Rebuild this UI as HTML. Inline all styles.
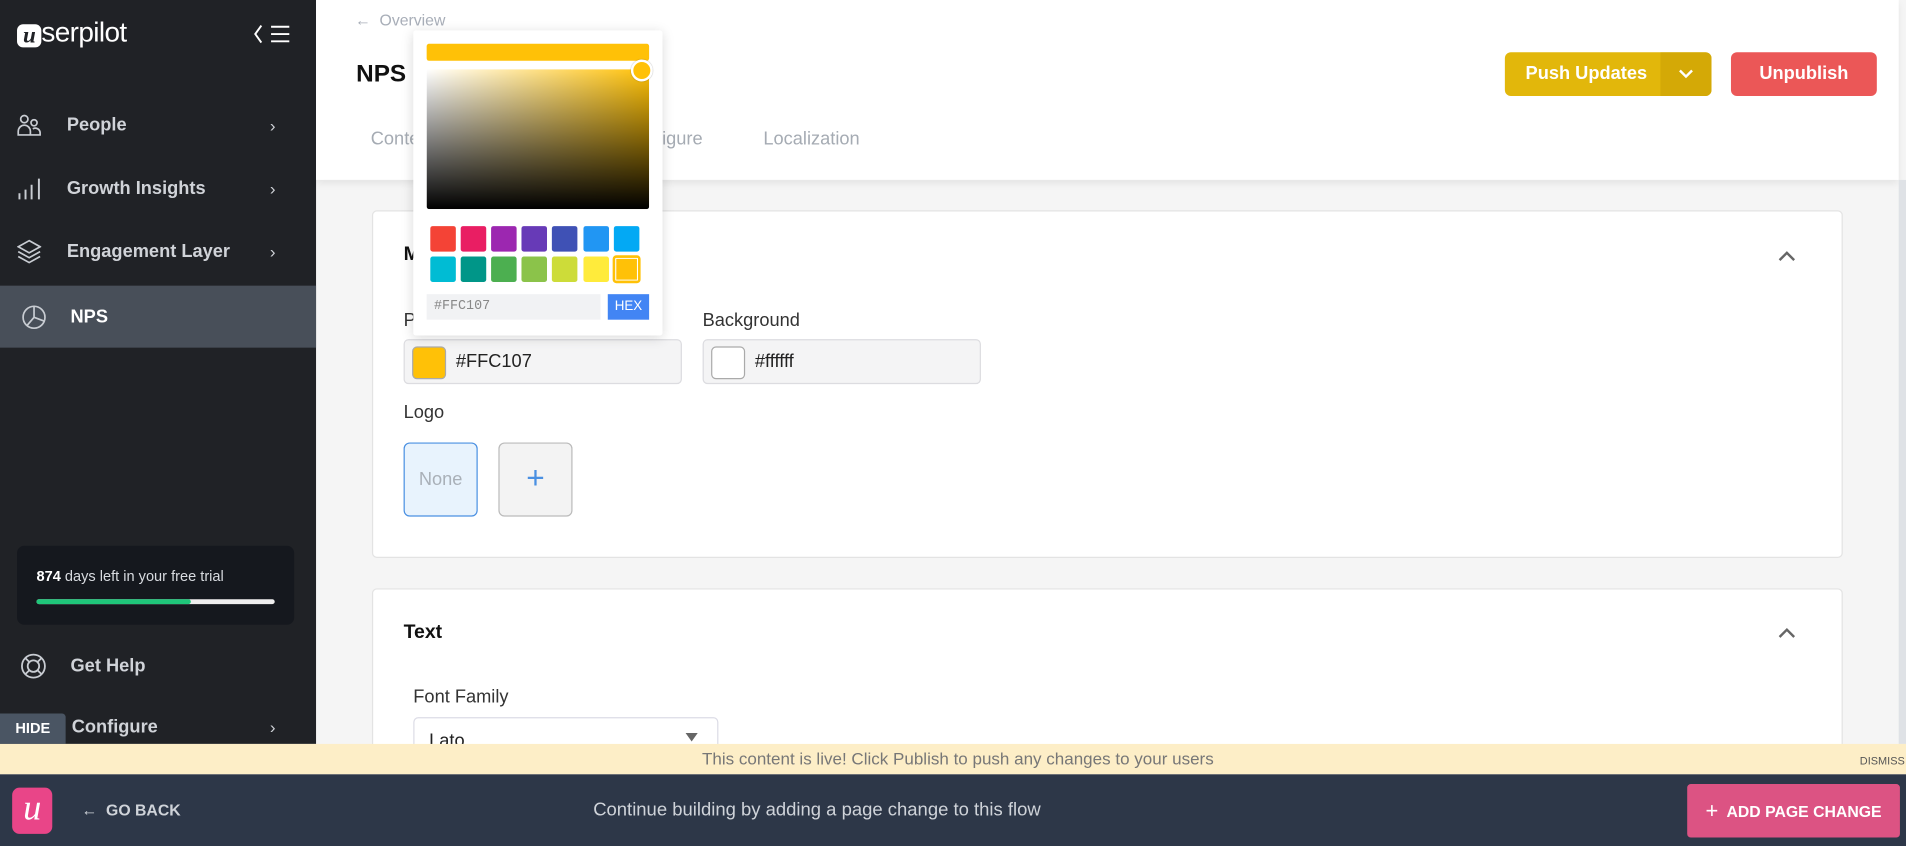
<!DOCTYPE html>
<html><head><meta charset="utf-8"><style>
*{box-sizing:border-box;margin:0;padding:0}
html,body{width:1906px;height:846px;overflow:hidden;background:#f5f5f5;font-family:"Liberation Sans",sans-serif}
#w{position:absolute;left:0;top:0;width:1568px;height:696px;transform:scale(1.21556);transform-origin:0 0;background:#f5f5f5}
.a{position:absolute}
.sb{left:0;top:0;width:260px;height:612px;background:#202226}
.nav{left:0;width:260px;height:52px;color:#d0d3d8;font-size:15px;font-weight:bold}
.nav span{position:absolute;left:55px;top:50%;transform:translateY(-50%)}
.nav .ch{left:222px;font-weight:normal;font-size:14px}
.nav svg{position:absolute;left:14px;top:50%;transform:translateY(-50%)}
.sw{width:21px;height:21px;border-radius:2px;position:absolute}
.inp{height:37px;width:229px;background:#f4f4f5;border:1px solid #dcdce0;border-radius:4px}
.lbl{font-size:15px;color:#333}
</style></head><body><div id="w">
<!-- sidebar -->
<div class="a sb">
 <div class="a" style="left:14px;top:13px;color:#fff;font-size:23px;letter-spacing:-0.5px"><span style="display:inline-block;background:#fff;color:#202226;border-radius:5px;font-family:'Liberation Serif',serif;font-style:italic;font-weight:bold;width:20px;height:19px;line-height:19px;text-align:center;font-size:19px;vertical-align:-1px">u</span>serpilot</div>
 <svg class="a" style="left:208px;top:19px" width="32" height="18" viewBox="0 0 32 18" fill="none" stroke="#fff" stroke-width="1.6"><path d="M7 2 L2 9 L7 16"/><path d="M15 3H30M15 9H30M15 15H30"/></svg>
 <div class="a nav" style="top:77px"><svg width="20" height="18" viewBox="0 0 20 18" fill="none" stroke="#c8ccd2" stroke-width="1.4"><circle cx="6" cy="4" r="3"/><circle cx="14" cy="7" r="2.5"/><path d="M1 17v-3a5 5 0 0 1 10 0v3zM11 17h8v-2a4 4 0 0 0-6-3"/></svg><span>People</span><span class="ch">›</span></div>
 <div class="a nav" style="top:129px"><svg width="20" height="20" viewBox="0 0 20 20" stroke="#c8ccd2" stroke-width="1.6"><path d="M2 19v-5M7 19v-8M12 19v-12M18 19v-17"/></svg><span>Growth Insights</span><span class="ch">›</span></div>
 <div class="a nav" style="top:181px"><svg width="20" height="20" viewBox="0 0 20 20" fill="none" stroke="#c8ccd2" stroke-width="1.4"><path d="M10 1L19 6L10 11L1 6Z"/><path d="M1 10L10 15L19 10M1 14L10 19L19 14"/></svg><span>Engagement Layer</span><span class="ch">›</span></div>
 <div class="a nav" style="top:235px;height:51px;background:#484f59;color:#fff"><svg style="left:18px" width="20" height="20" viewBox="0 0 20 20" fill="none" stroke="#c8ccd2" stroke-width="1.4"><circle cx="10" cy="10" r="9"/><path d="M10 1v9l8 3M10 10l-6 7"/></svg><span style="left:58px">NPS</span></div>
 <div class="a" style="left:14px;top:449px;width:228px;height:65px;background:#15181e;border-radius:6px">
  <div class="a" style="left:16px;top:18px;font-size:12px;color:#d8dbe0"><b style="color:#fff">874</b> days left in your free trial</div>
  <div class="a" style="left:16px;top:44px;width:196px;height:4px;background:#eee;border-radius:2px"><div style="width:127px;height:4px;background:#1fc67a;border-radius:2px"></div></div>
 </div>
 <div class="a nav" style="top:522px"><svg style="left:17px" width="21" height="21" viewBox="0 0 20 20" fill="none" stroke="#c8ccd2" stroke-width="1.4"><circle cx="10" cy="10" r="9"/><circle cx="10" cy="10" r="4.5"/><path d="M4 4l3 3M16 4l-3 3M4 16l3-3M16 16l-3-3"/></svg><span style="left:58px">Get Help</span></div>
 <div class="a nav" style="top:572px"><span style="left:59px">Configure</span><span class="ch">›</span></div>
 <div class="a" style="left:0;top:587px;width:54px;height:25px;background:#4a5563;color:#fff;font-weight:bold;font-size:12px;line-height:25px;text-align:center;border-radius:0 3px 0 0">HIDE</div>
</div>
<!-- header -->
<div class="a" style="left:260px;top:0;width:1302px;height:148px;background:#fff;box-shadow:0 3px 6px rgba(0,0,0,.07)"></div>
<div class="a" style="left:1562px;top:148px;width:6px;height:464px;background:#dfe2e6"></div>
<div class="a" style="left:292px;top:9px;font-size:13px;color:#a8aeb8">←&nbsp;&nbsp;Overview</div>
<div class="a" style="left:293px;top:50px;font-size:20px;font-weight:bold;color:#111">NPS</div>
<div class="a" style="left:305px;top:106px;font-size:15px;color:#a5abb3">Content</div>
<div class="a" style="left:513px;top:106px;font-size:15px;color:#a5abb3">Configure</div>
<div class="a" style="left:628px;top:106px;font-size:15px;color:#a5abb3">Localization</div>
<div class="a" style="left:1238px;top:43px;width:170px;height:36px;background:#e2b70b;border-radius:5px;overflow:hidden"><div class="a" style="left:17px;top:9px;color:#fff;font-weight:bold;font-size:15px">Push Updates</div><div class="a" style="left:128px;top:0;width:42px;height:36px;background:#d4a906"><svg class="a" style="left:14px;top:13px" width="14" height="10" viewBox="0 0 14 10" fill="none" stroke="#fff" stroke-width="2"><path d="M2 2l5 5 5-5"/></svg></div></div>
<div class="a" style="left:1424px;top:43px;width:120px;height:36px;background:#eb5757;border-radius:5px;color:#fff;font-weight:bold;font-size:15px;text-align:center;line-height:36px">Unpublish</div>
<!-- card1 -->
<div class="a" style="left:306px;top:173px;width:1210px;height:286px;background:#fff;border:1px solid #e3e3e3;border-radius:4px"></div>
<div class="a" style="left:332px;top:201px;font-size:16px;font-weight:bold;color:#111">Main</div>
<svg class="a" style="left:1463px;top:206px" width="14" height="9" viewBox="0 0 14 9" fill="none" stroke="#666" stroke-width="2"><path d="M1 8l6-6 6 6"/></svg>
<div class="a lbl" style="left:332px;top:255px">Primary</div>
<div class="a lbl" style="left:578px;top:255px">Background</div>
<div class="a inp" style="left:332px;top:279px"><div class="a" style="left:6px;top:5px;width:28px;height:27px;background:#ffc107;border:1px solid #aaa;border-radius:4px"></div><div class="a" style="left:42px;top:9px;font-size:15px;color:#222">#FFC107</div></div>
<div class="a inp" style="left:578px;top:279px"><div class="a" style="left:6px;top:5px;width:28px;height:27px;background:#fff;border:1px solid #aaa;border-radius:4px"></div><div class="a" style="left:42px;top:9px;font-size:15px;color:#222">#ffffff</div></div>
<div class="a lbl" style="left:332px;top:331px">Logo</div>
<div class="a" style="left:332px;top:364px;width:61px;height:61px;background:#e8f3fd;border:1px solid #4a90e2;border-radius:5px;color:#a9b0b8;font-size:15px;text-align:center;line-height:59px">None</div>
<div class="a" style="left:410px;top:364px;width:61px;height:61px;background:#f3f3f3;border:1px solid #bbb;border-radius:5px;color:#4a90e2;font-size:26px;text-align:center;line-height:57px">+</div>
<!-- card2 -->
<div class="a" style="left:306px;top:484px;width:1210px;height:140px;background:#fff;border:1px solid #e3e3e3;border-radius:4px"></div>
<div class="a" style="left:332px;top:512px;font-size:16px;font-weight:bold;color:#111">Text</div>
<svg class="a" style="left:1463px;top:516px" width="14" height="9" viewBox="0 0 14 9" fill="none" stroke="#666" stroke-width="2"><path d="M1 8l6-6 6 6"/></svg>
<div class="a lbl" style="left:340px;top:565px">Font Family</div>
<div class="a" style="left:340px;top:590px;width:251px;height:30px;border:1px solid #dcdce6;border-radius:4px;background:#fff"><div class="a" style="left:12px;top:10px;font-size:15px;color:#222">Lato</div><div class="a" style="left:223px;top:12px;width:0;height:0;border-left:5px solid transparent;border-right:5px solid transparent;border-top:7px solid #666"></div></div>
<!-- banner -->
<div class="a" style="left:0;top:612px;width:1568px;height:25px;background:#fdeec7"></div>
<div class="a" style="left:0;top:616px;width:1576px;text-align:center;font-size:14px;color:#777">This content is live! Click Publish to push any changes to your users</div>
<div class="a" style="left:1530px;top:621px;font-size:9px;color:#555">DISMISS</div>
<!-- bottom -->
<div class="a" style="left:0;top:637px;width:1568px;height:59px;background:#2d3748"></div>
<div class="a" style="left:10px;top:648px;width:33px;height:38px;background:#e94588;border-radius:6px;color:#fff;font-family:'Liberation Serif',serif;font-style:italic;font-size:30px;text-align:center;line-height:34px">u</div>
<div class="a" style="left:67px;top:659px;font-size:13px;color:#cfd3d9;font-weight:bold">←&nbsp; GO BACK</div>
<div class="a" style="left:488px;top:658px;font-size:15.2px;color:#cfd3d9">Continue building by adding a page change to this flow</div>
<div class="a" style="left:1388px;top:645px;width:175px;height:44px;background:#dc5383;border-radius:3px;color:#fff;font-weight:bold;font-size:13px;line-height:44px;text-align:center"><span style="font-weight:normal;font-size:18px;vertical-align:-1px">+</span>&nbsp; ADD PAGE CHANGE</div>
<!-- picker -->
<div class="a" style="left:340px;top:25px;width:205px;height:251px;background:#fff;box-shadow:0 2px 10px rgba(0,0,0,.15);border-radius:2px">
 <div class="a" style="left:11px;top:11px;width:183px;height:14px;background:#ffc107;border-radius:2px"></div>
 <div class="a" style="left:11px;top:32px;width:183px;height:115px;border-radius:2px;background:linear-gradient(to bottom,rgba(0,0,0,0),#000),linear-gradient(to right,#fff,#ffc107)"></div>
 <div class="a" style="left:179px;top:24px;width:18px;height:18px;border-radius:50%;background:#ffc107;border:2px solid #fff;box-shadow:0 0 1px rgba(0,0,0,.4)"></div>
 <div class="sw" style="left:14px;top:161px;background:#f44336"></div>
 <div class="sw" style="left:39px;top:161px;background:#e91e63"></div>
 <div class="sw" style="left:64px;top:161px;background:#9c27b0"></div>
 <div class="sw" style="left:89px;top:161px;background:#673ab7"></div>
 <div class="sw" style="left:114px;top:161px;background:#3f51b5"></div>
 <div class="sw" style="left:140px;top:161px;background:#2196f3"></div>
 <div class="sw" style="left:165px;top:161px;background:#03a9f4"></div>
 <div class="sw" style="left:14px;top:186px;background:#00bcd4"></div>
 <div class="sw" style="left:39px;top:186px;background:#009688"></div>
 <div class="sw" style="left:64px;top:186px;background:#4caf50"></div>
 <div class="sw" style="left:89px;top:186px;background:#8bc34a"></div>
 <div class="sw" style="left:114px;top:186px;background:#cddc39"></div>
 <div class="sw" style="left:140px;top:186px;background:#ffeb3b"></div>
 <div class="sw" style="left:164px;top:185px;width:23px;height:23px;background:#ffc107;border:2px solid #ffc107;box-shadow:inset 0 0 0 1px #fff;border-radius:3px"></div>
 <div class="a" style="left:11px;top:217px;width:143px;height:21px;background:#f1f2f4;font-family:'Liberation Mono',monospace;font-size:11px;color:#888;line-height:21px;padding-left:6px">#FFC107</div>
 <div class="a" style="left:160px;top:217px;width:34px;height:21px;background:#4285f4;color:#fff;font-size:11px;line-height:21px;text-align:center">HEX</div>
</div>
</div></body></html>
